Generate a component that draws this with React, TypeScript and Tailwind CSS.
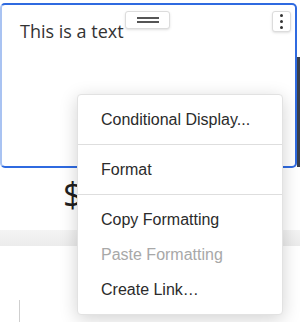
export default function App() {
  const groups = [
    [{ label: "Conditional Display...", disabled: false }],
    [{ label: "Format", disabled: false }],
    [
      { label: "Copy Formatting", disabled: false },
      { label: "Paste Formatting", disabled: true },
      { label: "Create Link…", disabled: false },
    ],
  ];

  return (
    <div className="relative w-[300px] h-[322px] overflow-hidden bg-white">
      {/* text widget being edited */}
      <div className="flex">
        <div className="relative mt-[3px] w-[297px] h-[165px] rounded-[5px] border-2 border-[#2f6ae0] border-l-[#a9c3f2] bg-white">
          <p className="pl-[18px] pt-[14px] text-[18px] leading-[24px] text-[#333]" style={{ fontFamily: '"Open Sans", sans-serif' }}>
            This is a text
          </p>

          {/* drag handle */}
          <div className="absolute left-[123px] top-[6px] flex h-[18px] w-[45px] flex-col items-center justify-center gap-[2px] rounded-[3px] border border-[#dcdcdc] bg-white shadow-sm">
            <span className="block h-[2px] w-[22px] bg-[#555]" />
            <span className="block h-[2px] w-[22px] bg-[#555]" />
          </div>

          {/* kebab */}
          <div className="absolute right-[4px] top-[6px] flex h-[21px] w-[19px] flex-col items-center justify-center gap-[3px] rounded-[3px] border border-[#dcdcdc] bg-white shadow-sm">
            <span className="block h-[3px] w-[3px] rounded-full bg-[#333]" />
            <span className="block h-[3px] w-[3px] rounded-full bg-[#333]" />
            <span className="block h-[3px] w-[3px] rounded-full bg-[#333]" />
          </div>
        </div>
        <div className="mt-[57px] h-[110px] w-[3px] bg-[#3a3f4a]" />
      </div>

      {/* value below */}
      <div className="pl-[63px] pt-[6px] h-[62px]">
        <span className="text-[34px] leading-[40px] text-[#1f1f1f]" style={{ fontFamily: '"Open Sans", sans-serif' }}>$</span>
      </div>

      <div className="h-[16px] bg-gradient-to-b from-[#f4f4f4] to-[#ececec]" />

      <div className="pl-[19px] pt-[54px]">
        <div className="h-[30px] w-px bg-[#cfcfcf]" />
      </div>

      {/* context menu */}
      <div
        className="absolute left-[77px] top-[94px] w-[206px] rounded-[4px] border border-[#e2e2e2] bg-white shadow-[0_4px_18px_rgba(0,0,0,0.18)]"
        style={{ fontFamily: '"Liberation Sans", Arial, sans-serif' }}
      >
        {groups.map((items, gi) => (
          <div key={gi} className={`py-[7px] ${gi > 0 ? "border-t border-[#dedede]" : ""}`}>
            {items.map((item) => (
              <div
                key={item.label}
                className={`flex h-[35px] items-center px-[23px] text-[16px] ${item.disabled ? "text-[#a8a8a8]" : "text-[#2b2b2b]"}`}
              >
                {item.label}
              </div>
            ))}
          </div>
        ))}
      </div>
    </div>
  );
}
